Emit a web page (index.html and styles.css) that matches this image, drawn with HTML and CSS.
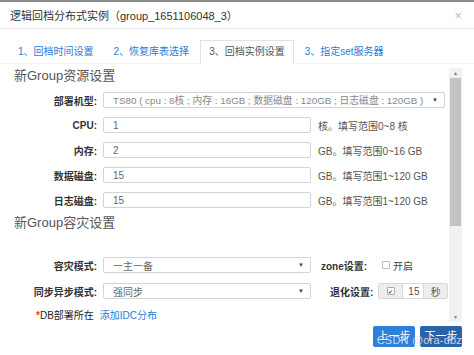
FILE: index.html
```html
<!DOCTYPE html>
<html lang="zh">
<head>
<meta charset="utf-8">
<title>逻辑回档分布式实例</title>
<link rel="stylesheet" href="styles.css">
</head>
<body>
<div class="dialog">
  <div class="header">
    <span class="title">逻辑回档分布式实例（group_1651106048_3）</span>
    <span class="close">×</span>
  </div>
  <div class="tabs">
    <span class="tab">1、回档时间设置</span>
    <span class="tab">2、恢复库表选择</span>
    <span class="tab active">3、回档实例设置</span>
    <span class="tab">3、指定set服务器</span>
  </div>
  <div class="body">
    <div class="main">
      <div class="heading">新Group资源设置</div>
      <div class="row">
        <span class="label">部署机型:</span>
        <div class="field select long"><span class="val">TS80 ( cpu : 8核 ; 内存 : 16GB ; 数据磁盘 : 120GB ; 日志磁盘 : 120GB )</span><span class="arrow">▼</span></div>
      </div>
      <div class="row">
        <span class="label">CPU:</span>
        <div class="field"><span class="val">1</span></div>
        <span class="hint">核。填写范围0~8 核</span>
      </div>
      <div class="row">
        <span class="label">内存:</span>
        <div class="field"><span class="val">2</span></div>
        <span class="hint">GB。填写范围0~16 GB</span>
      </div>
      <div class="row">
        <span class="label">数据磁盘:</span>
        <div class="field"><span class="val">15</span></div>
        <span class="hint">GB。填写范围1~120 GB</span>
      </div>
      <div class="row">
        <span class="label">日志磁盘:</span>
        <div class="field"><span class="val">15</span></div>
        <span class="hint">GB。填写范围1~120 GB</span>
      </div>
      <div class="heading h2">新Group容灾设置</div>
      <div class="row r-dr">
        <span class="label">容灾模式:</span>
        <div class="field select"><span class="val">一主一备</span><span class="arrow">▼</span></div>
        <span class="label2 zone">zone设置:</span>
        <span class="cb"></span>
        <span class="cbtext">开启</span>
      </div>
      <div class="row r-sync">
        <span class="label">同步异步模式:</span>
        <div class="field select"><span class="val">强同步</span><span class="arrow">▼</span></div>
        <span class="label2 degrade">退化设置:</span>
        <div class="group">
          <span class="addon"><span class="cb checked">✔</span></span>
          <span class="gin">15</span>
          <span class="addon">秒</span>
        </div>
      </div>
      <div class="row r-db">
        <span class="label dbl"><span class="star">*</span>DB部署所在</span>
        <span class="link">添加IDC分布</span>
      </div>
    </div>
    <div class="scrollbar">
      <span class="sarrow up">▲</span>
      <span class="thumb"></span>
      <span class="sarrow down">▼</span>
    </div>
  </div>
  <div class="footer">
    <span class="btn prev">上一步</span>
    <span class="btn next">下一步</span>
    <span class="watermark">CSDN @ora-dbz</span>
  </div>
</div>
</body>
</html>
```
FILE: styles.css
```css
*, *::before, *::after {
  box-sizing: border-box;
}
html, body {
  margin: 0;
  padding: 0;
  background: #fff;
}
body {
  font-family: "Liberation Sans", "Noto Sans CJK SC", sans-serif;
  color: #333;
  width: 474px;
  height: 355px;
  overflow: hidden;
}
.dialog {
  border-top: 2px solid #8a8a8a;
  height: 355px;
  position: relative;
}
.header {
  height: 27px;
  border-bottom: 1px solid #e6e6e6;
  display: flex;
  align-items: center;
  justify-content: space-between;
  padding: 0 12px 0 10px;
}
.title {
  font-size: 11px;
  color: #333;
}
.close {
  font-size: 13px;
  color: #bbb;
}
.tabs {
  margin-top: 11px;
  padding-left: 9px;
  display: flex;
  gap: 2px;
  height: 24px;
  border-bottom: 1px solid #f2f2f2;
}
.tab {
  font-size: 10px;
  color: #2a7bd4;
  padding: 0 8px;
  line-height: 22px;
  height: 24px;
  border: 1px solid transparent;
  border-bottom: none;
}
.tab.active {
  color: #555;
  border-color: #e2e2e2;
  background: #fff;
}
.body {
  margin-top: 4px;
  height: 254px;
  display: flex;
  padding-right: 12px;
}
.main {
  flex: 1;
  padding-left: 14px;
  display: flex;
  flex-direction: column;
  white-space: nowrap;
}
.heading {
  font-size: 13px;
  color: #555;
  line-height: 16px;
  height: 16px;
  margin-bottom: 8px;
}
.heading.h2 {
  margin-top: -2px;
  margin-bottom: 26px;
}
.row {
  display: flex;
  align-items: center;
  height: 16px;
  margin-bottom: 9px;
  font-size: 10px;
}
.row.r-dr { margin-bottom: 10px; }
.row.r-sync { margin-bottom: 8px; }
.label {
  width: 83px;
  text-align: right;
  font-weight: bold;
  color: #333;
  margin-right: 6px;
  flex: none;
}
.label.dbl {
  width: auto;
  margin-right: 0;
  padding-left: 22px;
  font-weight: normal;
  color: #222;
}
.star { color: #e33; font-weight: bold; }
.field {
  width: 208px;
  height: 16px;
  border: 1px solid #d4d4d4;
  border-radius: 2px;
  display: flex;
  align-items: center;
  padding: 0 6px 0 9px;
  color: #666;
  flex: none;
}
.field.long {
  width: 342px;
}
.val {
  flex: 1;
  white-space: nowrap;
  overflow: hidden;
}
.field.long .val {
  font-size: 9.8px;
  color: #888;
}
.arrow {
  font-size: 6px;
  color: #444;
}
.hint {
  margin-left: 7px;
  color: #555;
}
.label2 {
  font-weight: bold;
  color: #333;
}
.zone { margin-left: 10px; }
.degrade { margin-left: 19px; }
.cb {
  width: 8px;
  height: 8px;
  border: 1px solid #bbb;
  border-radius: 1px;
  margin-left: 15px;
  margin-right: 3px;
  display: inline-flex;
  align-items: center;
  justify-content: center;
}
.cbtext { color: #444; }
.group {
  margin-left: 5px;
  display: flex;
  height: 16px;
  border: 1px solid #d8d8d8;
  border-radius: 2px;
}
.addon {
  width: 23px;
  background: #eee;
  display: flex;
  align-items: center;
  justify-content: center;
  color: #555;
}
.cb.checked {
  margin: 0;
  font-size: 6px;
  color: #555;
  background: #fff;
  border-color: #aaa;
}
.gin {
  width: 22px;
  padding-left: 5px;
  border-left: 1px solid #d8d8d8;
  border-right: 1px solid #d8d8d8;
  display: flex;
  align-items: center;
  color: #555;
  overflow: hidden;
}
.link {
  color: #2a7bd4;
  margin-left: 6px;
}
.scrollbar {
  width: 13px;
  background: #f1f1f1;
  display: flex;
  flex-direction: column;
  align-items: center;
}
.sarrow {
  font-size: 5px;
  color: #777;
  height: 10px;
  line-height: 10px;
}
.thumb {
  width: 11px;
  height: 148px;
  background: #c3c3c3;
}
.sarrow.down {
  margin-top: auto;
}
.footer {
  margin-top: 4px;
  display: flex;
  justify-content: flex-end;
  gap: 5px;
  padding-right: 12px;
  position: relative;
}
.btn {
  width: 42px;
  height: 21px;
  line-height: 21px;
  text-align: center;
  color: #fff;
  font-size: 11px;
  border-radius: 2px;
}
.btn.prev { background: #2d7fd8; }
.btn.next { background: #2a63a9; }
.watermark {
  position: absolute;
  right: 12px;
  top: 8px;
  font-size: 11px;
  color: rgba(230, 230, 240, 0.85);
  letter-spacing: 0.2px;
}
```
